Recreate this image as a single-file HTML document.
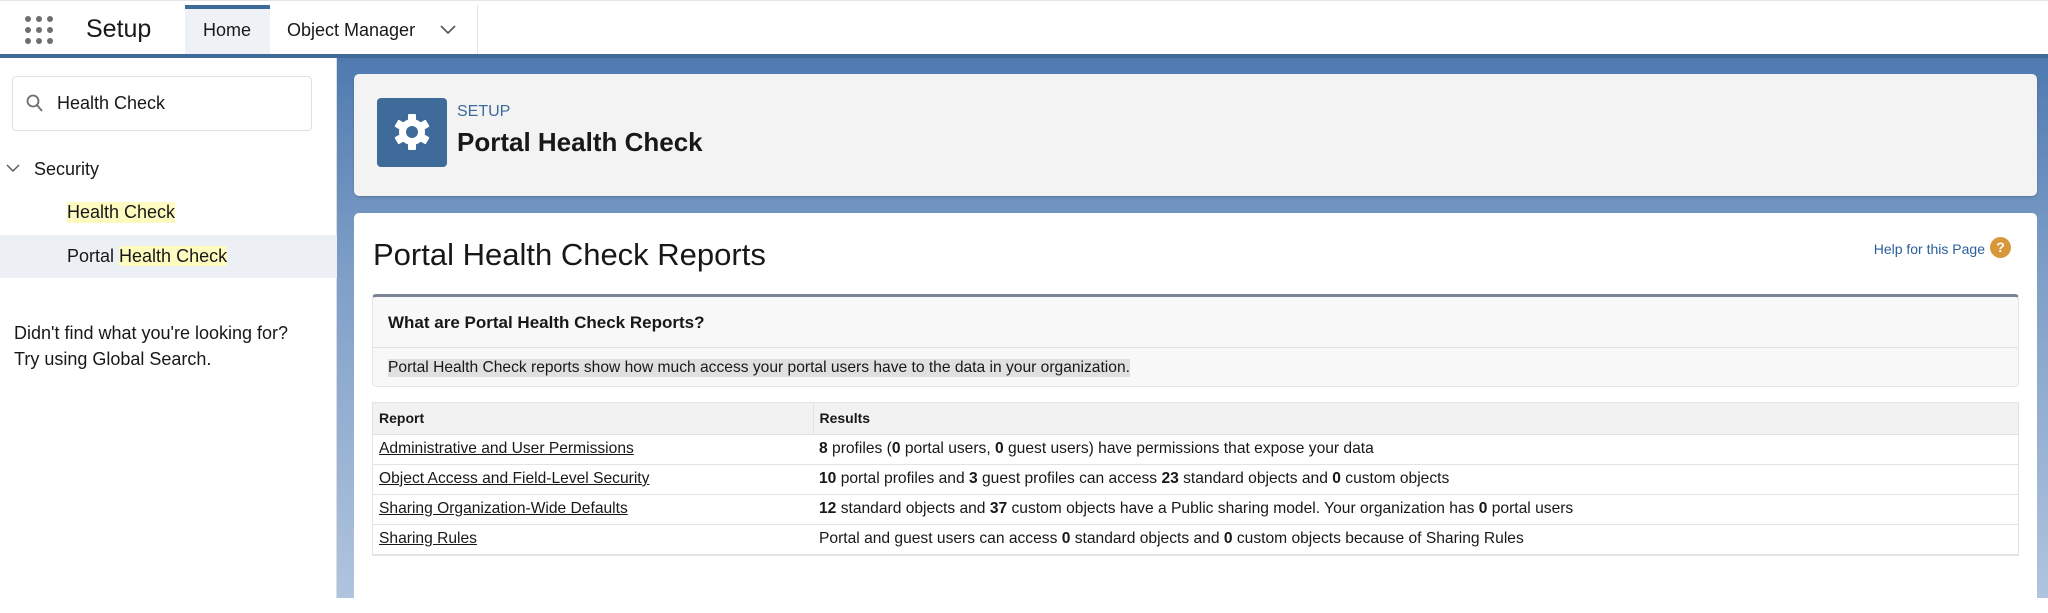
<!DOCTYPE html>
<html><head><meta charset="utf-8"><style>
*{box-sizing:border-box;margin:0;padding:0}
body{width:2048px;height:598px;overflow:hidden;font-family:"Liberation Sans",sans-serif;background:#fff;position:relative;color:#181818}
.hdr{position:absolute;left:0;top:0;width:2048px;height:54px;background:#fff;border-top:1px solid #e5e5e5}
.bl{position:absolute;left:0;top:54px;width:2048px;height:4px;background:#3e6b99}
.dot{position:absolute;width:6px;height:6px;border-radius:50%;background:#706e6b}
.side{position:absolute;left:0;top:58px;width:337px;height:540px;background:#fff;border-right:1px solid #ddd}
.main{position:absolute;left:337px;top:58px;width:1711px;height:540px;background:linear-gradient(180deg,#4f7ab0 0%,#7f9fc8 40%,#b0c4de 100%)}
.card{position:absolute;background:#fff;border-radius:5px}
.u{color:#181818;text-decoration:underline}
table{border-collapse:collapse;width:100%;font-size:15.6px}
td,th{text-align:left;padding:0 6px;border-bottom:1px solid #e3e3e3;height:30px}
th{background:#f2f2f2;font-weight:bold;font-size:14px;height:31px}
</style></head><body>
<div class="hdr">
  <div style="position:absolute;left:25px;top:15px;width:30px;height:30px">
    <div class="dot" style="left:0;top:0"></div><div class="dot" style="left:11px;top:0"></div><div class="dot" style="left:22px;top:0"></div>
    <div class="dot" style="left:0;top:11px"></div><div class="dot" style="left:11px;top:11px"></div><div class="dot" style="left:22px;top:11px"></div>
    <div class="dot" style="left:0;top:22px"></div><div class="dot" style="left:11px;top:22px"></div><div class="dot" style="left:22px;top:22px"></div>
  </div>
  <div style="position:absolute;left:86px;top:14px;font-size:25px">Setup</div>
  <div style="position:absolute;left:185px;top:4px;width:85px;height:50px;background:#eef1f6;border-top:4px solid #3e6b99"></div>
  <div style="position:absolute;left:203px;top:19px;font-size:18px">Home</div>
  <div style="position:absolute;left:287px;top:19px;font-size:18px">Object Manager</div>
  <svg style="position:absolute;left:440px;top:24px" width="16" height="10"><path d="M1 1 L8 8 L15 1" stroke="#555" stroke-width="1.6" fill="none"/></svg>
  <div style="position:absolute;left:477px;top:4px;width:1px;height:50px;background:#e5e5e5"></div>
</div>
<div class="bl"></div>
<div class="side">
  <div style="position:absolute;left:12px;top:18px;width:300px;height:55px;border:1px solid #e0e0e0;border-radius:4px"></div>
  <svg style="position:absolute;left:26px;top:36px" width="18" height="20"><circle cx="7" cy="7" r="5.5" stroke="#706e6b" stroke-width="1.8" fill="none"/><path d="M11 11 L16 17" stroke="#706e6b" stroke-width="1.8"/></svg>
  <div style="position:absolute;left:57px;top:35px;font-size:18px">Health Check</div>
  <svg style="position:absolute;left:6px;top:106px" width="14" height="10"><path d="M1 1 L7 7 L13 1" stroke="#555" stroke-width="1.4" fill="none"/></svg>
  <div style="position:absolute;left:34px;top:101px;font-size:18px">Security</div>
  <div style="position:absolute;left:67px;top:144px;font-size:18px;background:#fdfbc0">Health Check</div>
  <div style="position:absolute;left:0;top:177px;width:337px;height:43px;background:#eceff3"></div>
  <div style="position:absolute;left:67px;top:188px;font-size:18px">Portal <span style="background:#fdfbc0">Health Check</span></div>
  <div style="position:absolute;left:14px;top:262px;font-size:18px;line-height:26px">Didn't find what you're looking for?<br>Try using Global Search.</div>
</div>
<div class="main"></div>
<div class="card" style="left:354px;top:74px;width:1683px;height:122px;background:#f3f3f3;box-shadow:0 1px 2px rgba(0,0,0,.2)">
  <div style="position:absolute;left:23px;top:24px;width:70px;height:69px;background:#3e6b99;border-radius:4px">
    <svg width="70" height="69" viewBox="0 0 70 69"><g fill="#fff" transform="translate(35 34)">
      <circle r="13"/>
      <rect x="-4" y="-18" width="8" height="8" rx="1"/><rect x="-4" y="10" width="8" height="8" rx="1"/>
      <rect x="-4" y="-18" width="8" height="8" rx="1" transform="rotate(60)"/><rect x="-4" y="10" width="8" height="8" rx="1" transform="rotate(60)"/>
      <rect x="-4" y="-18" width="8" height="8" rx="1" transform="rotate(-60)"/><rect x="-4" y="10" width="8" height="8" rx="1" transform="rotate(-60)"/>
      <circle r="6" fill="#3e6b99"/></g></svg>
  </div>
  <div style="position:absolute;left:103px;top:29px;font-size:16px;color:#3e6b99">SETUP</div>
  <div style="position:absolute;left:103px;top:53px;font-size:26px;font-weight:bold">Portal Health Check</div>
</div>
<div class="card" style="left:354px;top:213px;width:1683px;height:400px">
  <div style="position:absolute;left:19px;top:24px;font-size:31px">Portal Health Check Reports</div>
  <div style="position:absolute;right:52px;top:28px;font-size:14px;color:#2a5e9a">Help for this Page</div>
  <div style="position:absolute;right:26px;top:24px;width:21px;height:21px;border-radius:50%;background:#d8973a;color:#fff;font-size:14px;font-weight:bold;text-align:center;line-height:21px">?</div>
  <div style="position:absolute;left:18px;top:81px;width:1647px;height:93px;background:#f8f8f8;border:1px solid #e6e6e6;border-top:3px solid #7b8497;border-radius:4px">
    <div style="position:absolute;left:15px;top:16px;font-size:17px;font-weight:bold">What are Portal Health Check Reports?</div>
    <div style="position:absolute;left:0;top:50px;width:100%;height:1px;background:#e3e3e3"></div>
    <div style="position:absolute;left:15px;top:62px;font-size:15.6px;background:#e0e0e0">Portal Health Check reports show how much access your portal users have to the data in your organization.</div>
  </div>
  <div style="position:absolute;left:18px;top:189px;width:1647px;border:1px solid #e3e3e3">
  <table>
    <tr><th style="width:440px;border-right:1px solid #e3e3e3">Report</th><th>Results</th></tr>
    <tr><td><span class="u">Administrative and User Permissions</span></td><td><b>8</b> profiles (<b>0</b> portal users, <b>0</b> guest users) have permissions that expose your data</td></tr>
    <tr><td><span class="u">Object Access and Field-Level Security</span></td><td><b>10</b> portal profiles and <b>3</b> guest profiles can access <b>23</b> standard objects and <b>0</b> custom objects</td></tr>
    <tr><td><span class="u">Sharing Organization-Wide Defaults</span></td><td><b>12</b> standard objects and <b>37</b> custom objects have a Public sharing model. Your organization has <b>0</b> portal users</td></tr>
    <tr><td><span class="u">Sharing Rules</span></td><td>Portal and guest users can access <b>0</b> standard objects and <b>0</b> custom objects because of Sharing Rules</td></tr>
  </table></div>
</div>
</body></html>
